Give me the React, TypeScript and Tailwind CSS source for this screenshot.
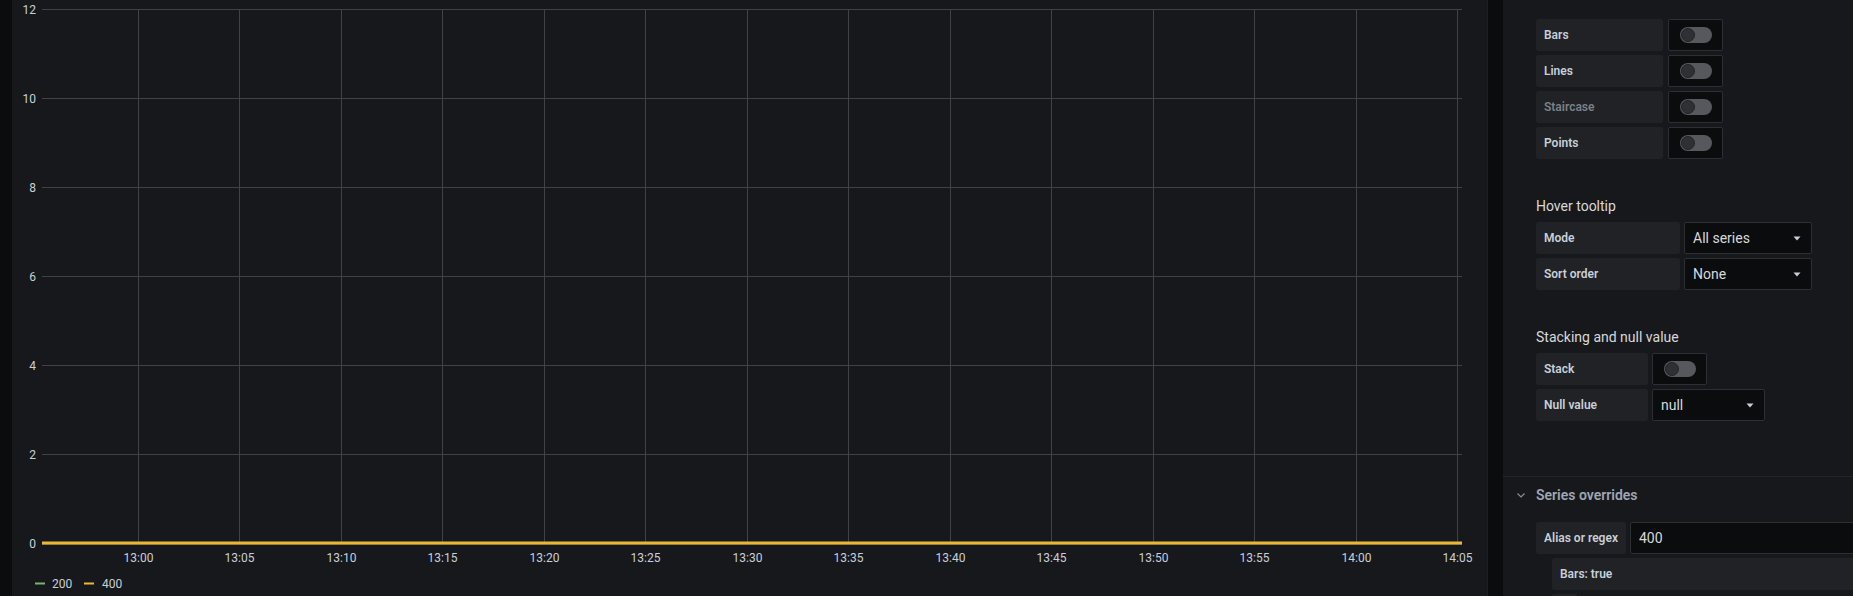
import React from 'react';

// ---------------------------------------------------------------------------
// Chart config
// ---------------------------------------------------------------------------
const yTicks = [12, 10, 8, 6, 4, 2, 0];
const xTicks = [
  '13:00', '13:05', '13:10', '13:15', '13:20', '13:25', '13:30',
  '13:35', '13:40', '13:45', '13:50', '13:55', '14:00', '14:05',
];
const gridLeft = 42;
const gridRight = 1462;
const gridTop = 9;
const rowStep = 89;
const firstX = 138;
const colStep = 101.46;
const gridBottom = gridTop + rowStep * 6;

function GraphPanel() {
  return (
    <svg width="1474" height="596" className="block">
      <g transform="translate(-13,0)" fontFamily="Roboto, 'Liberation Sans', sans-serif" fontSize="12">
        {yTicks.map((v, i) => {
          const y = gridTop + i * rowStep;
          return (
            <g key={v}>
              <line x1={gridLeft} x2={gridRight} y1={y + 0.5} y2={y + 0.5} stroke="#404246" strokeWidth="1" />
              <text x={36} y={y + 4.5} textAnchor="end" fill="#c7d0d9">{v}</text>
            </g>
          );
        })}
        {xTicks.map((t, i) => {
          const x = Math.round(firstX + i * colStep) + 0.5;
          return (
            <g key={t}>
              <line x1={x} x2={x} y1={gridTop} y2={gridBottom} stroke="#404246" strokeWidth="1" />
              <text x={x} y={562} textAnchor="middle" fill="#c7d0d9">{t}</text>
            </g>
          );
        })}
        {/* series at zero */}
        <line x1={gridLeft} x2={gridRight} y1={gridBottom + 1.5} y2={gridBottom + 1.5} stroke="#3d4a36" strokeWidth="1" />
        <line x1={gridLeft} x2={gridRight} y1={gridBottom} y2={gridBottom} stroke="#eab839" strokeWidth="3" />

        {/* legend */}
        <line x1={35} x2={45} y1={583.5} y2={583.5} stroke="#7eb26d" strokeWidth="2" />
        <text x={52} y={587.5} fill="#c7d0d9">200</text>
        <line x1={84} x2={94} y1={583.5} y2={583.5} stroke="#eab839" strokeWidth="2" />
        <text x={102} y={587.5} fill="#c7d0d9">400</text>
      </g>
    </svg>
  );
}

// ---------------------------------------------------------------------------
// Form bits
// ---------------------------------------------------------------------------
function Label({ text, width, dim = false }: { text: string; width: string; dim?: boolean }) {
  return (
    <div
      className={`${width} h-8 shrink-0 rounded-[2px] bg-[#202226] px-2 flex items-center text-[12px] font-semibold ${
        dim ? 'text-[#7b8087]' : 'text-[#c7d0d9]'
      }`}
    >
      {text}
    </div>
  );
}

function Toggle() {
  return (
    <div className="w-[55px] h-8 shrink-0 rounded-[2px] border border-[#2c2f34] bg-[#0b0c0e] flex items-center pl-[11px]">
      <div className="w-8 h-4 rounded-full bg-[#56585d] flex items-center pl-[1px]">
        <div className="w-[14px] h-[14px] rounded-full bg-[#2e3034] border border-[#232427]" />
      </div>
    </div>
  );
}

function Caret() {
  return (
    <svg width="8" height="5" viewBox="0 0 8 5" className="shrink-0">
      <path d="M0.5 0.5 L7.5 0.5 L4 4.5 Z" fill="#c7d0d9" />
    </svg>
  );
}

function Select({ value, width }: { value: string; width: string }) {
  return (
    <div
      className={`${width} h-8 shrink-0 rounded-[2px] border border-[#2c2f34] bg-[#0b0c0e] pl-[8px] pr-[10px] flex items-center justify-between text-[14px] text-[#d8d9da]`}
    >
      <span>{value}</span>
      <Caret />
    </div>
  );
}

function Heading({ text }: { text: string }) {
  return <div className="h-5 flex items-center text-[14px] text-[#d8d9da] mb-[6px]">{text}</div>;
}

function OptionsPanel() {
  return (
    <div className="h-full bg-[#17181b] overflow-hidden">
      <div className="pl-[33px] pt-[19px]">
        <div className="flex flex-col gap-1">
          {['Bars', 'Lines', 'Staircase', 'Points'].map((t) => (
            <div key={t} className="flex gap-[5px]">
              <Label text={t} width="w-[127px]" dim={t === 'Staircase'} />
              <Toggle />
            </div>
          ))}
        </div>

        <div className="mt-[37px]">
          <Heading text="Hover tooltip" />
          <div className="flex flex-col gap-1">
            <div className="flex gap-1">
              <Label text="Mode" width="w-[144px]" />
              <Select value="All series" width="w-[128px]" />
            </div>
            <div className="flex gap-1">
              <Label text="Sort order" width="w-[144px]" />
              <Select value="None" width="w-[128px]" />
            </div>
          </div>
        </div>

        <div className="mt-[37px]">
          <Heading text="Stacking and null value" />
          <div className="flex flex-col gap-1">
            <div className="flex gap-1">
              <Label text="Stack" width="w-[112px]" />
              <Toggle />
            </div>
            <div className="flex gap-1">
              <Label text="Null value" width="w-[112px]" />
              <Select value="null" width="w-[113px]" />
            </div>
          </div>
        </div>
      </div>

      <div className="mt-[55px] border-t border-[#222428]">
        <div className="h-[37px] flex items-center pl-[14px]">
          <svg width="8" height="5" viewBox="0 0 8 5" className="mr-[11px]">
            <path d="M0.5 0.5 L4 4 L7.5 0.5" fill="none" stroke="#8e9196" strokeWidth="1.1" />
          </svg>
          <span className="text-[14px] font-semibold text-[#9fa7b3]">Series overrides</span>
        </div>
        <div className="pl-[33px] pt-[8px]">
          <div className="flex gap-1">
            <Label text="Alias or regex" width="w-[90px]" />
            <div className="w-[300px] h-8 shrink-0 rounded-[2px] border border-[#2c2f34] bg-[#0b0c0e] px-2 flex items-center text-[14px] text-[#d8d9da]">
              400
            </div>
          </div>
          <div className="ml-4 mt-1 w-[400px] h-8 rounded-[2px] bg-[#202226] px-2 flex items-center text-[12px] font-semibold text-[#c7d0d9]">
            Bars: true
          </div>
          <div className="ml-4 mt-1 w-[25px] h-8 rounded-[2px] bg-[#202226]" />
        </div>
      </div>
    </div>
  );
}

export default function App() {
  return (
    <div className="flex h-[596px] w-full overflow-hidden bg-[#0b0c0e] font-['Roboto','Liberation_Sans',sans-serif]">
      <div className="w-[13px] shrink-0 border-r border-[#18191c]" />
      <div className="w-[1474px] shrink-0 bg-[#17181b]">
        <GraphPanel />
      </div>
      <div className="w-[16px] shrink-0 border-l border-[#1d1f22]" />
      <div className="flex-1 min-w-0">
        <OptionsPanel />
      </div>
    </div>
  );
}
